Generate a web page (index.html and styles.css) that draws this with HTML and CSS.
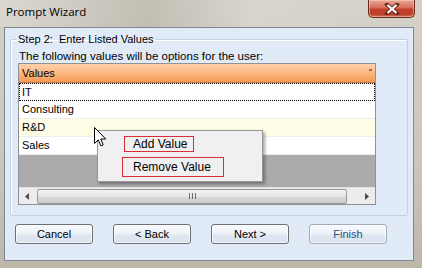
FILE: index.html
```html
<!DOCTYPE html>
<html lang="en">

<head>
    <meta charset="UTF-8">
    <meta name="viewport" content="width=device-width, initial-scale=1.0">
    <title>Prompt Wizard</title>
    <link rel="stylesheet" href="styles.css">
</head>

<body>
    <div id="window">
        <div id="titlebar">
            <span class="title">Prompt Wizard</span>
            <div id="close">
                <svg width="16" height="12" viewBox="0 0 16 12">
                    <path d="M3 1.5 L13 10.5 M13 1.5 L3 10.5" stroke="#6a2a20" stroke-width="4" stroke-linecap="square" />
                    <path d="M3.5 2 L12.5 10 M12.5 2 L3.5 10" stroke="#ffffff" stroke-width="2.2" />
                </svg>
            </div>
        </div>

        <div id="client">
            <fieldset class="group">
                <legend>Step 2:&nbsp; Enter Listed Values</legend>
                <p class="hint">The following values will be options for the user:</p>

                <div id="grid">
                    <div class="head">
                        <span>Values</span>
                        <i class="sort"></i>
                    </div>
                    <ul class="rows">
                        <li class="focus">IT</li>
                        <li>Consulting</li>
                        <li class="hover">R&amp;D</li>
                        <li>Sales</li>
                    </ul>
                    <div class="empty"></div>
                    <div class="hscroll">
                        <div class="arrow">
                            <svg width="5" height="7" viewBox="0 0 5 7"><path d="M4 0 L0 3.5 L4 7 Z" fill="#4d4d4d" /></svg>
                        </div>
                        <div class="thumb"><span class="grip"></span></div>
                        <div class="track"></div>
                        <div class="arrow">
                            <svg width="5" height="7" viewBox="0 0 5 7"><path d="M1 0 L5 3.5 L1 7 Z" fill="#4d4d4d" /></svg>
                        </div>
                    </div>
                </div>
            </fieldset>

            <div class="buttons">
                <button>Cancel</button>
                <button>&lt; Back</button>
                <button>Next &gt;</button>
                <button class="finish">Finish</button>
            </div>
        </div>

        <!-- 右键菜单 -->
        <ul id="menu">
            <li class="add">Add Value</li>
            <li class="remove">Remove Value</li>
        </ul>

        <svg id="cursor" width="13" height="21" viewBox="0 0 13 21">
            <path d="M0.5 0.5 L0.5 16.5 L4.3 12.8 L6.8 18.8 L9.2 17.8 L6.8 12 L11.8 12 Z" fill="#ffffff" stroke="#000000" stroke-width="1" stroke-linejoin="miter" />
        </svg>
    </div>
</body>

</html>
```
FILE: styles.css
```css
* {
    margin: 0;
    padding: 0;
    box-sizing: border-box;
}

li {
    list-style: none;
}

body {
    background: #cdc8bd;
    font-family: "Liberation Sans", Arial, sans-serif;
    font-size: 11px;
    color: #000;
}

#window {
    position: relative;
    width: 422px;
    height: 268px;
    background: linear-gradient(180deg, #d5d1c8 0%, #cbc6bb 60%, #bdb7aa 100%);
    overflow: hidden;
}

#titlebar {
    height: 27px;
    display: flex;
    justify-content: space-between;
    align-items: flex-start;
    padding: 0 7px 0 6px;
    background: linear-gradient(90deg, rgba(255,255,255,0.15), rgba(120,110,95,0.18) 35%, rgba(255,255,255,0.1) 60%, rgba(0,0,0,0));
}

#titlebar .title {
    font-family: "Open Sans", "Liberation Sans", sans-serif;
    font-size: 11.5px;
    line-height: 16px;
    margin-top: 4px;
    color: #000;
}

#close {
    width: 47px;
    height: 18px;
    display: flex;
    align-items: center;
    justify-content: center;
    border: 1px solid #6d2a1f;
    border-top: none;
    border-radius: 0 0 5px 5px;
    background: linear-gradient(180deg, #e8a696 0%, #d66f58 45%, #c2402a 55%, #b8432c 85%, #d9765c 100%);
    box-shadow: inset 0 0 0 1px rgba(255, 220, 210, 0.45);
}

#client {
    height: 234px;
    margin: 0 8px 0 4px;
    border: 1px solid #7f8893;
    background: #e1ebf8;
    padding: 5px 5px 0 5px;
}

.group {
    height: 183px;
    border: 1px solid #c6d0dc;
    box-shadow: inset 1px 1px 0 #ffffff;
    border-radius: 2px;
    padding: 0;
}

.group legend {
    margin-left: 5px;
    padding: 0 2px;
    line-height: 13px;
}

.hint {
    padding-left: 8px;
    margin-top: 3px;
    line-height: 14px;
    font-size: 11.5px;
}

#grid {
    width: 358px;
    height: 142px;
    margin-left: 7px;
    border: 1px solid #8f9194;
    display: flex;
    flex-direction: column;
    background: #fff;
}

#grid .head {
    height: 19px;
    display: flex;
    justify-content: space-between;
    align-items: center;
    padding: 0 3px 0 3px;
    background: linear-gradient(180deg, #ffd2ac 0%, #fdb984 45%, #f69a55 100%);
    border-bottom: 1px solid #c97a44;
}

#grid .sort {
    width: 3px;
    height: 2px;
    margin-top: -6px;
    background: #9a6a48;
}

.rows li {
    height: 18px;
    line-height: 17px;
    padding-left: 3px;
    border-bottom: 1px solid #eeeeee;
}

.rows li.focus {
    border: 1px dotted #000;
    padding-left: 2px;
}

.rows li.hover {
    background: #fffde6;
}

#grid .empty {
    flex: 1;
    background: #ababab;
}

.hscroll {
    height: 17px;
    display: flex;
    align-items: center;
    background: #ececec;
    border-top: 1px solid #e3e3e3;
}

.hscroll .arrow {
    width: 17px;
    height: 16px;
    display: flex;
    align-items: center;
    justify-content: center;
}

.hscroll .thumb {
    width: 310px;
    height: 15px;
    margin-left: 1px;
    border: 1px solid #979797;
    border-radius: 2px;
    background: linear-gradient(180deg, #f3f3f3 0%, #e6e6e6 50%, #d6d6d6 55%, #cdcdcd 100%);
    display: flex;
    align-items: center;
    justify-content: center;
}

.hscroll .grip {
    width: 7px;
    height: 6px;
    background: repeating-linear-gradient(90deg, #6f6f6f 0 1px, transparent 1px 3px);
}

.hscroll .track {
    flex: 1;
}

.buttons {
    display: flex;
    gap: 20px;
    padding: 8px 0 0 5px;
}

.buttons button {
    width: 78px;
    height: 20px;
    font-family: "Liberation Sans", Arial, sans-serif;
    font-size: 11px;
    color: #000;
    border: 1px solid #707070;
    border-radius: 3px;
    background: linear-gradient(180deg, #f7f9fc 0%, #edf2f8 50%, #dfe7f1 55%, #d9e3ef 100%);
    box-shadow: inset 0 0 0 1px rgba(255, 255, 255, 0.7);
}

.buttons button.finish {
    color: #2a4d8a;
    border-color: #a3adb9;
}

#menu {
    position: absolute;
    left: 97px;
    top: 130px;
    width: 166px;
    height: 52px;
    background: #f0f0f0;
    border: 1px solid #979797;
    box-shadow: 2px 2px 3px rgba(0, 0, 0, 0.35);
    padding: 5px 0 0 24px;
    display: flex;
    flex-direction: column;
    align-items: flex-start;
    gap: 5px;
    font-size: 12px;
}

#menu li {
    border: 1px solid #d4303c;
}

#menu .add {
    width: 70px;
    height: 16px;
    line-height: 14px;
    padding-left: 8px;
    margin-left: 2px;
}

#menu .remove {
    width: 102px;
    height: 20px;
    line-height: 18px;
    padding-left: 10px;
}

#cursor {
    position: absolute;
    left: 94px;
    top: 127px;
}
```
